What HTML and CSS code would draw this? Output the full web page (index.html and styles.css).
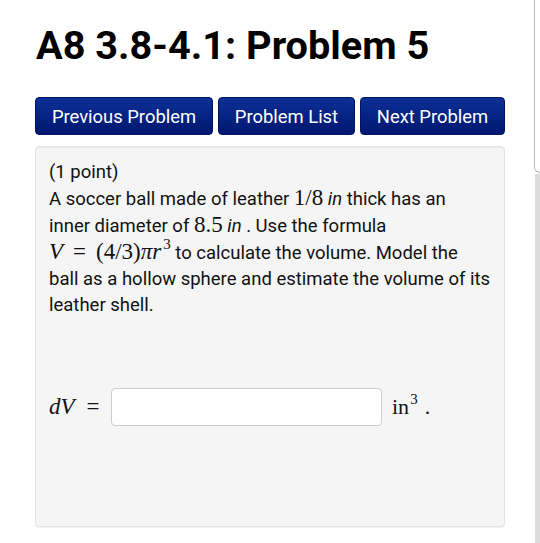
FILE: index.html
```html
<!DOCTYPE html>
<html>
<head>
<meta charset="utf-8">
<link rel="stylesheet" href="styles.css">
</head>
<body>
<div class="page">
  <h1 class="title">A8 3.8-4.1: Problem 5</h1>
  <div class="nav">
    <a class="btn btn-prev">Previous Problem</a>
    <a class="btn btn-list">Problem List</a>
    <a class="btn btn-next">Next Problem</a>
  </div>
  <div class="panel">
    <div class="problem">
      (1 point)<br>
      A soccer ball made of leather <span class="m">1/8</span> <i>in</i> thick has an inner diameter of <span class="m">8.5</span> <i>in</i> . Use the formula <span class="m"><i>V</i><span class="eq">=</span>(4/3)<i>πr</i><sup>3</sup></span> to calculate the volume. Model the ball as a hollow sphere and estimate the volume of its leather shell.
    </div>
    <div class="answer">
      <span class="m lhs"><i>dV</i><span class="eq">=</span></span>
      <span class="input"></span>
      <span class="m unit">in<sup>3</sup></span><span class="m dot">.</span>
    </div>
  </div>
</div>
<div class="scroll"></div>
<div class="scroll-below"></div>
</body>
</html>
```

FILE: styles.css
```css
html, body {
  margin: 0;
  padding: 0;
  background: #ffffff;
}
body {
  font-family: Roboto, "Liberation Sans", sans-serif;
  color: #111;
  width: 540px;
  height: 543px;
  overflow: hidden;
  position: relative;
}
.page {
  padding-left: 35px;
  width: 470px;
}
.title {
  margin: 0;
  padding-top: 23px;
  padding-left: 1px;
  font-size: 39.7px;
  line-height: 45px;
  font-weight: 700;
  color: #000;
}
.nav {
  display: flex;
  gap: 5px;
  margin-top: 29px;
}
.btn {
  display: flex;
  align-items: center;
  justify-content: center;
  height: 38px;
  box-sizing: border-box;
  border-radius: 4px;
  background: linear-gradient(#0d2f96, #001770);
  color: #fff;
  font-size: 18.4px;
  border: 1px solid #001460;
}
.btn-prev { width: 178px; }
.btn-list { width: 137px; }
.btn-next { width: 145px; }
.panel {
  margin-top: 11px;
  height: 381px;
  box-sizing: border-box;
  background: #f5f5f5;
  border: 1px solid #e3e3e3;
  border-radius: 4px;
  box-shadow: inset 0 1px 1px rgba(0,0,0,0.05), 0 1px 1px rgba(0,0,0,0.06);
  padding: 12px 13px 0 13px;
}
.problem {
  font-size: 18.5px;
  line-height: 26px;
  color: #111;
}
.problem i {
  font-style: italic;
}
.m {
  font-family: "Liberation Serif", "DejaVu Serif", serif;
  font-size: 23px;
  white-space: nowrap;
}
.m i {
  font-style: italic;
}
.eq {
  margin: 0 10px;
}
sup {
  font-size: 15px;
  line-height: 0;
  vertical-align: 10px;
  margin-left: 2px;
}
.answer {
  display: flex;
  align-items: center;
  margin-top: 70px;
  height: 38px;
}
.lhs {
  width: 62px;
  font-size: 23px;
}
.lhs .eq {
  margin: 0 0 0 12px;
}
.input {
  width: 271px;
  height: 38px;
  box-sizing: border-box;
  background: #fff;
  border: 1px solid #cccccc;
  border-radius: 4px;
}
.unit {
  margin-left: 10px;
  font-size: 22px;
}
.unit sup {
  margin-left: 1px;
}
.dot {
  margin-left: 7px;
  font-size: 22px;
}
.scroll {
  position: absolute;
  top: 0;
  right: 0;
  width: 5px;
  height: 172px;
  background: #fff;
  border-left: 1px solid #b8b8b8;
  border-bottom: 1px solid #b8b8b8;
  border-bottom-left-radius: 6px;
}
.scroll-below {
  position: absolute;
  top: 174px;
  right: 0;
  width: 5px;
  bottom: 0;
  background: #dcdcdc;
}
```
